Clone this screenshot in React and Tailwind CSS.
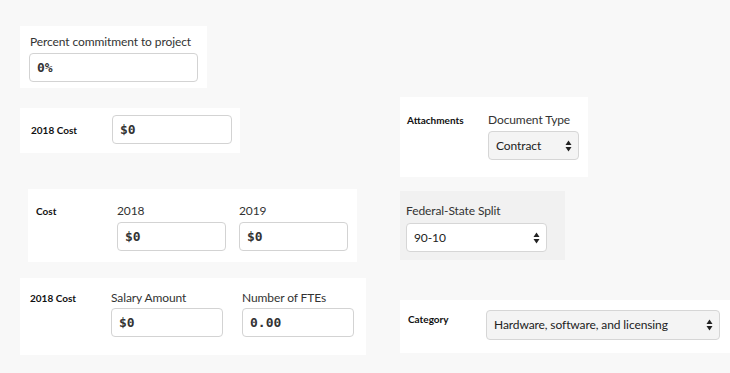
const sans = { fontFamily: 'Lato, "Open Sans", sans-serif' };

function Arrows() {
  return (
    <svg width="7" height="12" viewBox="0 0 7 12" className="flex-none">
      <path d="M3.5 0.5 L6.5 5 L0.5 5 Z" fill="#222" />
      <path d="M3.5 11.5 L6.5 7 L0.5 7 Z" fill="#222" />
    </svg>
  );
}

function Field({ value, className = '' }) {
  return (
    <div
      className={`flex h-[29px] items-center rounded-[4px] border border-[#d3d3d3] bg-white px-[7px] text-[13px] font-bold text-[#333] ${className}`}
      style={{ fontFamily: '"DejaVu Sans Mono", "Liberation Mono", monospace' }}
    >
      {value}
    </div>
  );
}

function Select({ value, className = '', bg = 'bg-[#f4f4f4]' }) {
  return (
    <div
      className={`flex h-[29px] items-center justify-between rounded-[4px] border border-[#d6d6d6] ${bg} pl-[7px] pr-[6px] text-[12px] tracking-[-0.1px] text-[#222] ${className}`}
    >
      <span className="whitespace-nowrap">{value}</span>
      <Arrows />
    </div>
  );
}

const lbl = 'whitespace-nowrap text-[12px] leading-[16px] tracking-[-0.1px]';
const tag = 'text-[10px] font-bold leading-[12px] text-[#111]';

export default function App() {
  return (
    <div className="flex h-[373px] w-[730px] overflow-hidden bg-[#f8f8f8] text-[#333]" style={sans}>
      <div className="flex w-[380px] flex-none flex-col pl-[20px]">
        <div className="mt-[26px] h-[62px] w-[187px] bg-white px-[9px] pt-[8px]">
          <div className={`${lbl} pl-[1px]`}>Percent commitment to project</div>
          <Field value="0%" className="mt-[3px] w-[169px]" />
        </div>

        <div className="mt-[20px] flex h-[45px] w-[220px] bg-white pt-[7px] pl-[11px]">
          <div className={`w-[81px] pt-[9px] ${tag}`}>2018 Cost</div>
          <Field value="$0" className="w-[120px]" />
        </div>

        <div className="mt-[36px] ml-[8px] flex h-[73px] w-[329px] bg-white pl-[8px] pt-[14px]">
          <div className={`w-[81px] pt-[2px] ${tag}`}>Cost</div>
          <div className="flex gap-[13px]">
            <div>
              <div className={lbl}>2018</div>
              <Field value="$0" className="mt-[3px] w-[109px]" />
            </div>
            <div>
              <div className={lbl}>2019</div>
              <Field value="$0" className="mt-[3px] w-[109px]" />
            </div>
          </div>
        </div>

        <div className="mt-[16px] flex h-[77px] w-[346px] bg-white pl-[10px] pt-[12px]">
          <div className={`w-[81px] pt-[2px] ${tag}`}>2018 Cost</div>
          <div className="flex gap-[19px]">
            <div>
              <div className={lbl}>Salary Amount</div>
              <Field value="$0" className="mt-[2px] w-[112px]" />
            </div>
            <div>
              <div className={lbl}>Number of FTEs</div>
              <Field value="0.00" className="mt-[2px] w-[112px]" />
            </div>
          </div>
        </div>
      </div>

      <div className="flex flex-1 flex-col pl-[20px]">
        <div className="mt-[97px] flex h-[80px] w-[188px] bg-white pl-[7px] pt-[15px]">
          <div className={`w-[81px] pt-[2px] ${tag}`}>Attachments</div>
          <div>
            <div className={lbl}>Document Type</div>
            <Select value="Contract" className="mt-[3px] w-[91px]" />
          </div>
        </div>

        <div className="mt-[14px] h-[69px] w-[165px] bg-[#f1f1f1] pl-[6px] pt-[12px]">
          <div className={lbl}>Federal-State Split</div>
          <Select value="90-10" bg="bg-white" className="mt-[4px] w-[141px]" />
        </div>

        <div className="mt-[40px] flex h-[53px] w-[330px] bg-white pl-[8px] pt-[10px]">
          <div className={`w-[78px] pt-[3px] ${tag}`}>Category</div>
          <Select value="Hardware, software, and licensing" className="h-[30px] w-[234px]" />
        </div>
      </div>
    </div>
  );
}
